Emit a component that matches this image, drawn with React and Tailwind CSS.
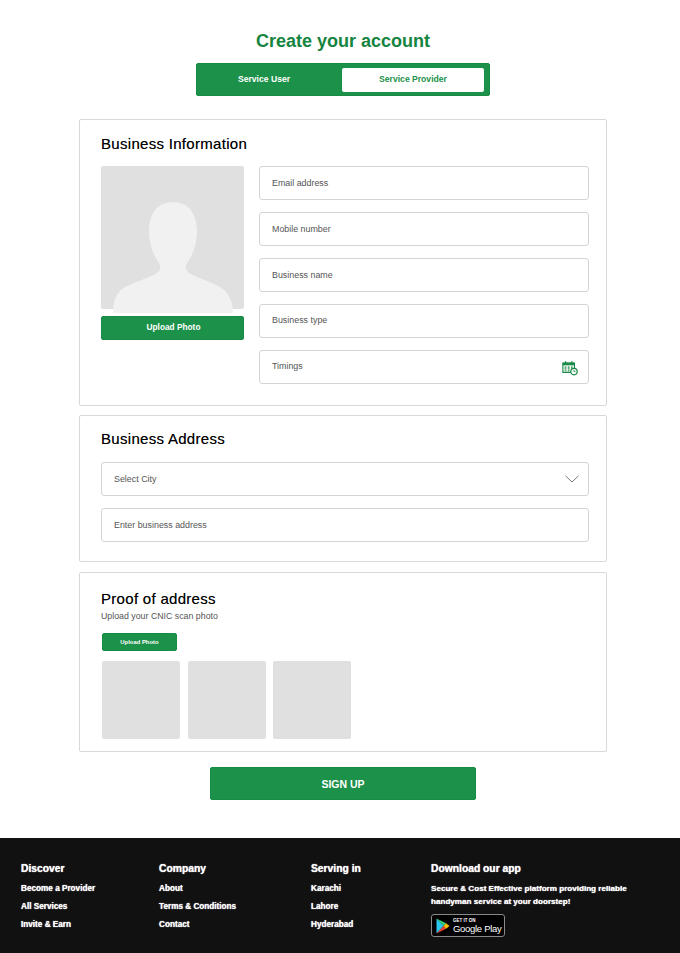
const Field = ({ label, nudge, children }) => (
  <div className="flex items-center justify-between h-[34px] px-[12px] bg-white border border-[#d4d4d4] rounded-[3px] text-[8.9px] text-[#555]">
    <span className={nudge ? "pt-[2px]" : ""}>{label}</span>
    {children}
  </div>
);

const CalendarIcon = () => (
  <svg width="16" height="16" viewBox="0 0 18 18" className="mr-[-2px] mt-[1px]" fill="none">
    <path d="M1 3.5h13v10.5H1z" fill="#fff" stroke="#1a8a46" strokeWidth="1.3" />
    <path d="M1 3h13v3H1z" fill="#1a8a46" />
    <path d="M4 1.5v3M11 1.5v3" stroke="#1a8a46" strokeWidth="1.4" />
    <path d="M3 8h2M6.5 8h2M10 8h2M3 10h2M6.5 10h2M10 10h2M3 12h2M6.5 12h2" stroke="#1a8a46" strokeWidth="1.2" />
    <circle cx="13.5" cy="13" r="3.6" fill="#fff" stroke="#1a8a46" strokeWidth="1.4" />
    <path d="M13.5 11.2V13h1.6" stroke="#1a8a46" strokeWidth="1" />
  </svg>
);

const Chevron = () => (
  <svg width="14" height="8" viewBox="0 0 14 8" className="mr-[-3px]" fill="none">
    <path d="M0.5 0.8L7 7l6.5-6.2" stroke="#777" strokeWidth="1" />
  </svg>
);

const Avatar = () => (
  <svg viewBox="0 0 143 111" className="absolute left-0 top-[36px] w-[143px] h-[111px]">
    <path
      d="M12 111C12 102 14 94 19 89c5-5 14-8 24-12 8-3 15-6 16-10 1-3-1-6-3-9-5-8-8-18-8-29C48 11 57 0 72 0s24 11 24 29c0 11-3 21-8 29-2 3-4 6-3 9 1 4 8 7 16 10 10 4 18 7 23 12 5 5 8 13 8 22z"
      fill="#f1f1f1"
    />
  </svg>
);

const FooterCol = ({ title, links, className }) => (
  <div className={className}>
    <h4 className="text-[10.3px] leading-[14px] font-bold mb-[4px]">{title}</h4>
    {links.map((link) => (
      <div key={link} className="text-[8.2px] leading-[18px] font-bold">{link}</div>
    ))}
  </div>
);

const GooglePlay = () => (
  <div className="flex items-center w-[74px] h-[23px] mt-[6px] bg-black border border-[#8a8a8a] rounded-[3px] pl-[4px] gap-[3px] [text-shadow:none]">
    <svg width="14" height="16" viewBox="0 0 14 16" className="shrink-0">
      <path d="M0.5 0.5v15L7.5 8z" fill="#2bc6f0" />
      <path d="M0.5 0.5L7.5 8l2.6-2.7z" fill="#35d07f" />
      <path d="M0.5 15.5L7.5 8l2.6 2.7z" fill="#ea4335" />
      <path d="M10.1 5.3L13.5 8l-3.4 2.7L7.5 8z" fill="#fbbc04" />
    </svg>
    <div className="flex flex-col text-white whitespace-nowrap">
      <span className="text-[4.5px] leading-[5px] font-bold">GET IT ON</span>
      <span className="text-[9.5px] leading-[11px] tracking-[-0.3px]">Google Play</span>
    </div>
  </div>
);

export default function App() {
  return (
    <div className="min-h-[953px] bg-white font-['Liberation_Sans',Arial,sans-serif] flex flex-col">
      <div className="flex flex-col items-center pl-[6px] pt-[30px]">
        <h1 className="text-[18px] leading-[22px] font-bold text-[#15843f]">Create your account</h1>

        {/* Tabs */}
        <div className="flex items-center w-[294px] h-[33px] mt-[11px] bg-[#1c914a] border border-[#188b45] rounded-[2px] pl-[3px] pr-[5px]">
          <div className="w-[128px] text-center text-[8.6px] font-bold text-white">Service User</div>
          <div className="flex-1 ml-[14px] h-[24px] flex items-center justify-center bg-white rounded-[2px] text-[8.6px] font-bold text-[#1c914a]">Service Provider</div>
        </div>

        {/* Business info */}
        <section className="w-[528px] h-[287px] mt-[23px] pl-[21px] pr-[17px] pt-[15px] border border-[#d9d9d9] rounded-[2px]">
          <h2 className="text-[15px] leading-[18px] tracking-[0.3px] text-black [text-shadow:0_0_0.3px_rgba(0,0,0,0.5)]">Business Information</h2>
          <div className="flex gap-[15px] mt-[13px]">
            <div className="w-[143px]">
              <div className="relative h-[143px] bg-[#e0e0e0] rounded-[2px]">
                <Avatar />
              </div>
              <div className="relative flex items-center justify-center h-[24px] mt-[7px] pb-[2px] pl-[2px] bg-[#1c914a] border border-[#188b45] rounded-[2px] text-[8.3px] font-bold text-white">Upload Photo</div>
            </div>
            <div className="flex-1 flex flex-col gap-[12px]">
              <Field nudge label="Email address" />
              <Field nudge label="Mobile number" />
              <Field nudge label="Business name" />
              <Field label="Business type" />
              <Field label="Timings"><CalendarIcon /></Field>
            </div>
          </div>
        </section>

        {/* Business address */}
        <section className="w-[528px] h-[147px] mt-[9px] pl-[21px] pr-[17px] pt-[14px] border border-[#d9d9d9] rounded-[2px]">
          <h2 className="text-[15px] leading-[18px] tracking-[0.3px] text-black [text-shadow:0_0_0.3px_rgba(0,0,0,0.5)]">Business Address</h2>
          <div className="flex flex-col gap-[12px] mt-[14px]">
            <Field nudge label="Select City"><Chevron /></Field>
            <Field nudge label="Enter business address" />
          </div>
        </section>

        {/* Proof of address */}
        <section className="w-[528px] h-[180px] mt-[10px] pl-[21px] pr-[17px] pt-[17px] border border-[#d9d9d9] rounded-[2px]">
          <h2 className="text-[15px] leading-[18px] tracking-[0.3px] text-black [text-shadow:0_0_0.3px_rgba(0,0,0,0.5)]">Proof of address</h2>
          <p className="text-[8.8px] leading-[12px] mt-[2px] text-[#555]">Upload your CNIC scan photo</p>
          <div className="flex items-center justify-center w-[75px] h-[18px] ml-[1px] mt-[11px] bg-[#1c914a] border border-[#188b45] rounded-[2px] text-[5.9px] font-bold text-white">Upload Photo</div>
          <div className="flex gap-[7.5px] ml-[1px] mt-[10px]">
            <div className="w-[78px] h-[78px] bg-[#e0e0e0] rounded-[2px]" />
            <div className="w-[78px] h-[78px] bg-[#e0e0e0] rounded-[2px]" />
            <div className="w-[78px] h-[78px] bg-[#e0e0e0] rounded-[2px]" />
          </div>
        </section>

        <div className="flex items-center justify-center w-[266px] h-[33px] mt-[15px] pt-[2px] bg-[#1c914a] border border-[#188b45] rounded-[2px] text-[10.5px] font-bold text-white">SIGN UP</div>
      </div>

      {/* Footer */}
      <footer className="flex h-[115px] mt-[38px] pt-[24px] bg-[#111] text-white [text-shadow:0_0_1px_#fff]">
        <FooterCol className="w-[138px] ml-[21px]" title="Discover" links={["Become a Provider", "All Services", "Invite & Earn"]} />
        <FooterCol className="w-[152px]" title="Company" links={["About", "Terms & Conditions", "Contact"]} />
        <FooterCol className="w-[120px]" title="Serving in" links={["Karachi", "Lahore", "Hyderabad"]} />
        <div className="w-[230px]">
          <h4 className="text-[10.3px] leading-[14px] font-bold mb-[6px]">Download our app</h4>
          <p className="text-[8.1px] leading-[13px] font-bold">Secure & Cost Effective platform providing reliable<br />handyman service at your doorstep!</p>
          <GooglePlay />
        </div>
      </footer>
    </div>
  );
}
